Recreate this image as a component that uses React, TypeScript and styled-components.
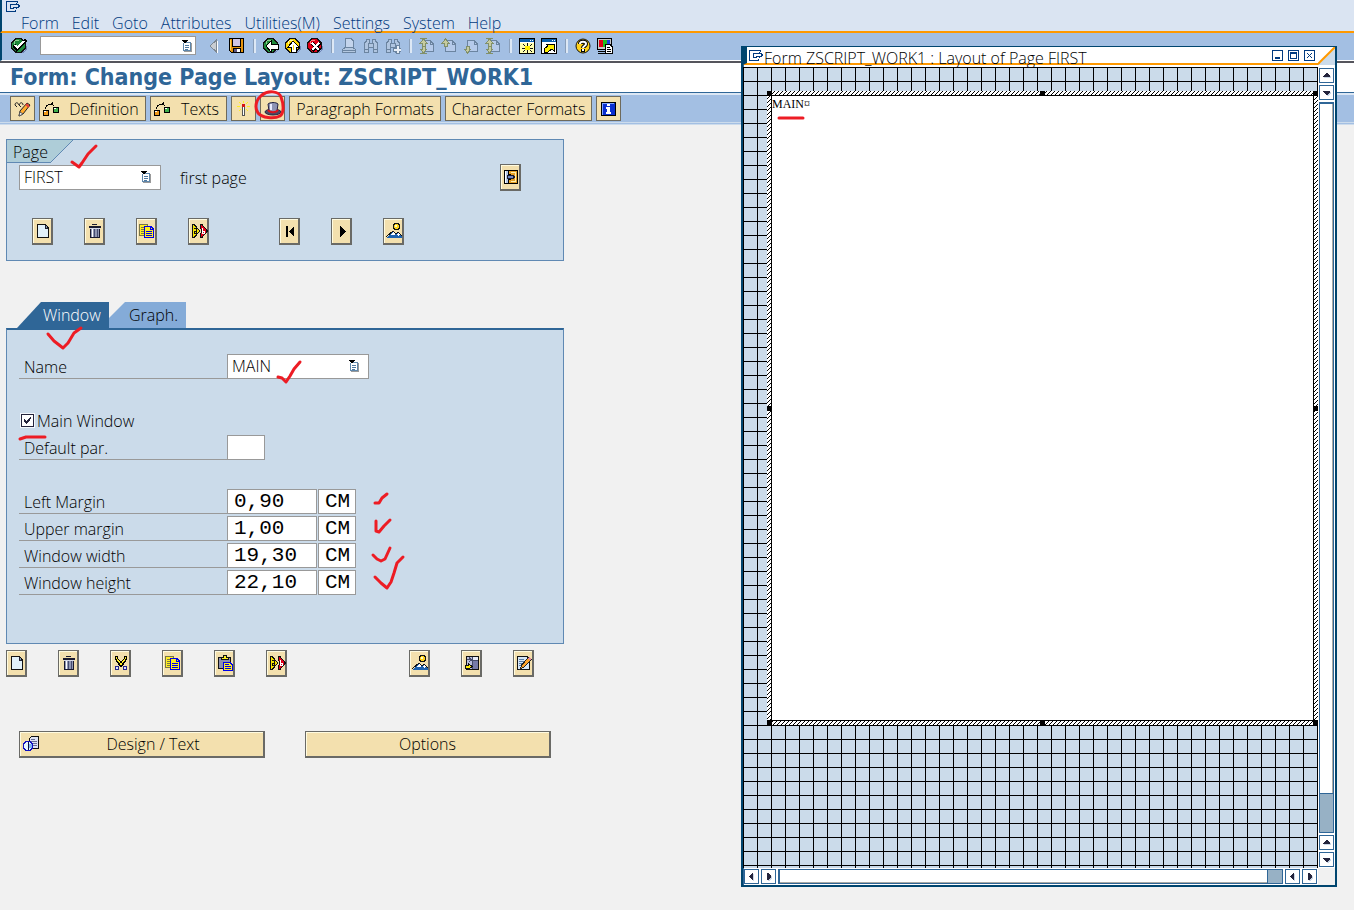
import React from "react";
import styled, { createGlobalStyle } from "styled-components";

const sans = `"Open Sans", "Noto Sans", sans-serif`;
const mono = `"Liberation Mono", monospace`;

const color = {
  frame: "#00456f",
  blue: "#2f6697",
  link: "#003a80",
  sky: "#a3bfe3",
  panel: "#cbdbea",
  sand: "#f3e0ae",
  orange: "#ff9900",
  page: "#f1f1f1",
  grey: "#999999",
};

const Global = createGlobalStyle`
  * { box-sizing: border-box; }
  body { margin: 0; background: ${color.page}; color: #000; font: 300 16px/20px ${sans}; }
  button, input, select { font: inherit; color: inherit; margin: 0; padding: 0; border-radius: 0; }
  svg { display: block; flex: none; }
`;

/* ---------- icons ---------- */

const Glyph = ({ w = 16, h = 16, children }: { w?: number; h?: number; children: React.ReactNode }) => (
  <svg width={w} height={h} viewBox={`0 0 ${w} ${h}`} fill="none" shapeRendering="crispEdges" aria-hidden="true">
    {children}
  </svg>
);

const ExitIcon = () => (
  <Glyph w={15} h={11}>
    <path d="M11 1.500V.5H.5V10.500H9.500V9" stroke="#003a80" />
    <path d="M4.500 7.500V3.500H10V2L14 5L10 8V6.500H7V7.500Z" stroke="#003a80" />
  </Glyph>
);

const ListIcon = () => (
  <Glyph w={10} h={12}>
    <path d="M2 2.500H8.500V10.500H1.500V3" fill="#fff" stroke="#5f87ab" />
    <path d="M9.500 3V11.500H2" stroke="#9a9a9a" />
    <path d="M3 5.500H7M3 7.500H7M3 9.500H6" stroke="#4f79a0" />
    <path d="M0 0H6V1H5V2H4V3H2V2H1V1H0Z" fill="#000" />
  </Glyph>
);

const Disc = ({ fill, hi, children }: { fill: string; hi: string; children: React.ReactNode }) => (
  <Glyph>
    <path d="M6 15H13L16 11V6L14 13Z" fill="#7286b8" />
    <path d="M5 .5H10L14.500 5V10L10 14.500H5L.5 10V5Z" fill={fill} stroke="#111" />
    <path d="M3 6V4L5 2H8" stroke={hi} />
    {children}
  </Glyph>
);

const EnterIcon = () => (
  <Disc fill="#1f8a3b" hi="#8fd08f">
    <path d="M3 7L6 11L15 2" stroke="#000" strokeWidth="4" />
    <path d="M4 7L6.500 10L13 3" stroke="#fff" strokeWidth="2" />
  </Disc>
);
const BackIcon = () => (
  <Disc fill="#1f8a3b" hi="#8fd08f">
    <path d="M3 8L8 3V6H15V11H8V14Z" fill="#fff" stroke="#000" />
  </Disc>
);
const UpIcon = () => (
  <Disc fill="#ffd900" hi="#fff7a0">
    <path d="M8 3L14 9H11V14H6V9H3Z" fill="#fff" stroke="#000" />
    <path d="M8 7H9V12H8Z" fill="#ffd900" />
  </Disc>
);
const CancelIcon = () => (
  <Disc fill="#e00018" hi="#ff8080">
    <path d="M5 5L13 13M13 5L5 13" stroke="#000" strokeWidth="4" />
    <path d="M5 5L12 12M12 5L5 12" stroke="#fff" strokeWidth="2" />
  </Disc>
);
const PrevIcon = () => (
  <Glyph>
    <path d="M9.500 2V14L3 8Z" fill="#c9cdd2" stroke="#7d8791" />
    <path d="M10.500 3V15" stroke="#fff" />
  </Glyph>
);
const SaveIcon = () => (
  <Glyph>
    <path d="M.5 .5H14.500V14.500H2.500L.5 12.500Z" fill="#e8940c" stroke="#000" />
    <path d="M3 0H12V9H3Z" fill="#000" />
    <path d="M4 1H11V8H4Z" fill="#cfc5e4" />
    <path d="M4 10H12V15H4Z" fill="#000" />
    <path d="M5 11H8V14H5Z" fill="#5c5480" />
    <path d="M8 11H11V14H8Z" fill="#fff" />
    <path d="M1.500 2V12" stroke="#ffd45c" />
  </Glyph>
);
const PrintIcon = () => (
  <Glyph>
    <path d="M4.500 9.500V.5H10L12.500 3V9.500" fill="#c3d4ec" stroke="#6b84a0" />
    <path d="M1.500 11.500L4 9.500H12L14.500 11.500V14.500H1.500Z" fill="#b4c8e0" stroke="#6b84a0" />
    <path d="M2 12.500H14" stroke="#6b84a0" />
  </Glyph>
);
const Lens = () => (
  <path
    d="M1.500 14.500V5L3.500 3V1.500H6.500V5H9.500V1.500H12.500V3L14.500 5V14.500H10.500V9.500H5.500V14.500ZM5.500 5V14M10.500 5V14M2 11.500H5M11 11.500H14"
    fill="#b0c5e0"
    stroke="#6b84a0"
  />
);
const FindIcon = () => (
  <Glyph>
    <Lens />
  </Glyph>
);
const FindNextIcon = () => (
  <Glyph>
    <Lens />
    <path d="M8 10H11V7H14V10H16V13H14V15H11V13H8Z" fill="#e8eef6" stroke="#6b84a0" />
  </Glyph>
);
const PageMoveIcon = ({ up, down, edge }: { up?: boolean; down?: boolean; edge?: boolean }) => (
  <Glyph>
    <path d="M4.500 2.500H11L14.500 6V13.500H4.500Z" fill="#b5caea" stroke="#6b84a0" />
    <path d="M11.500 3V6.500H14.500" stroke="#6b84a0" />
    {up && <path d="M4.500 1L8 5H6V8H3V5H1Z" fill="#c6cba0" stroke="#81906a" />}
    {down && <path d="M4.500 15L8 11H6V8H3V11H1Z" fill="#c6cba0" stroke="#81906a" />}
    {edge && <path d="M1 .5H8M1 15.500H8" stroke="#81906a" />}
  </Glyph>
);
const WinFrame = () => (
  <>
    <path d="M.5 .5H15.500V15.500H.5Z" fill="#fff" stroke="#000" />
    <path d="M1 1H15V4H1Z" fill="#0a5fae" />
    <path d="M11 2H12V3H11ZM13 2H14V3H13Z" fill="#fff" />
  </>
);
const SessionIcon = () => (
  <Glyph>
    <WinFrame />
    <path d="M1 5H15V15H1Z" fill="#ffffb0" />
    <path d="M8.500 5V8M8.500 12V15M3 10.500H6M11 10.500H14M4 6L6 8M13 6L11 8M4 14L6 12M13 14L11 12" stroke="#111" />
    <path d="M6 8H11V12H6Z" fill="#ffee00" />
  </Glyph>
);
const ShortcutIcon = () => (
  <Glyph>
    <WinFrame />
    <path d="M3 14V11L7 8L5 6H13V13L11 11L7 14Z" fill="#ffee00" stroke="#000" />
  </Glyph>
);
const HelpIcon = () => (
  <svg width="16" height="16" viewBox="0 0 16 16" fill="none" aria-hidden="true">
    <circle cx="8" cy="8" r="7" fill="#ffd21a" stroke="#111" strokeWidth="1" />
    <path d="M5 6C5 3 11 3 11 6C11 8 8 8 8 10" stroke="#000" strokeWidth="4" />
    <path d="M8 11V14" stroke="#000" strokeWidth="4" />
    <path d="M5 6C5 3 11 3 11 6C11 8 8 8 8 10" stroke="#fff" strokeWidth="2" />
    <path d="M8 11V13" stroke="#fff" strokeWidth="2" />
  </svg>
);
const LayoutIcon = () => (
  <Glyph>
    <path d="M.5 .5H14.500V11.500H.5Z" fill="#c8c8c8" stroke="#000" />
    <path d="M2 2H6V9H2Z" fill="#e00018" />
    <path d="M6 2H10V9H6Z" fill="#1ec01e" />
    <path d="M10 2H13V9H10Z" fill="#1a3de0" />
    <path d="M1 13.500H8M1 15.500H8" stroke="#000" />
    <path d="M8.500 6.500H13L15.500 9V15.500H8.500Z" fill="#fff" stroke="#000" />
    <path d="M10 9.500H13M10 11.500H14M10 13.500H14" stroke="#000" />
  </Glyph>
);

const DisplayChangeIcon = () => (
  <svg width="17" height="16" viewBox="0 0 17 16" fill="none" aria-hidden="true">
    <path d="M1 4C1 1 4 1 5 4M5 4C6 1 9 1 9 4M1 4L3 6M5 4L7 6" stroke="#222" />
    <path d="M13 2L16 4L9 13L5 15L6 10Z" fill="#ffab2e" stroke="#222" />
    <path d="M12 3L15 6" stroke="#e23a3a" strokeWidth="2" />
    <path d="M6 11L9 13L5 15Z" fill="#fff" stroke="#555" />
  </svg>
);
const TreeIcon = () => (
  <Glyph>
    <path d="M2.500 8V6M3.500 6V4M4 4.500H5M5 3.500H8M8 2.500L11 5M9.500 4V1" stroke="#000" />
    <path d="M.5 9.500H5.500V14.500H.5Z" fill="#f09a1a" stroke="#000" />
    <path d="M10.500 6.500H15.500V11.500H10.500Z" fill="#3fae4c" stroke="#000" />
    <path d="M1 10.500H3M11 7.500H13" stroke="#fff" />
  </Glyph>
);
const WandIcon = () => (
  <Glyph>
    <path d="M4 1L6 3M13 1L11 3M2 5.500H5M12 5.500H15M4 10L6 8M13 10L11 8M8.500 0V2" stroke="#ffee22" />
    <path d="M7 3H10V6H7Z" fill="#d81414" />
    <path d="M7.500 6V14.500H9.500V6" fill="#fff" stroke="#555" />
  </Glyph>
);
const HatIcon = () => (
  <svg width="18" height="16" viewBox="0 0 18 16" fill="none" aria-hidden="true">
    <ellipse cx="9" cy="11" rx="8" ry="3" fill="#4b4b66" stroke="#222240" />
    <path d="M4 3C6 1 12 1 14 3L13 10C11 12 7 12 5 10Z" fill="#8e93b5" stroke="#222240" />
    <path d="M7 3V9" stroke="#e8eaff" strokeWidth="2" />
    <path d="M4 9C6 12 12 12 14 9" stroke="#d81420" strokeWidth="2" />
  </svg>
);
const InfoIcon = () => (
  <Glyph>
    <path d="M1.500 1.500H15.500V14.500H1.500Z" fill="#0b2fd0" stroke="#000" />
    <path d="M2.500 14V2.500H14" stroke="#7ea2ff" />
    <path d="M7 3H10V5H7ZM6 6H10V11H11V13H6V11H7V8H6Z" fill="#fff" />
  </Glyph>
);

const NewIcon = () => (
  <Glyph>
    <path d="M2.500 1.500H10L13.500 5V14.500H2.500Z" fill="#e2f1fa" stroke="#111" />
    <path d="M10.500 2V5.500H13" fill="#7c92ad" stroke="#223" />
  </Glyph>
);
const TrashIcon = () => (
  <Glyph>
    <path d="M5 1.500H10M2.500 3.500H13.500V4.500H2.500Z" stroke="#1a1a2e" />
    <path d="M3.500 6V14.500H12.500V6" fill="#9197b3" stroke="#1a1a2e" />
    <path d="M5.500 6V14" stroke="#fff" />
    <path d="M7.500 6V14M10.500 6V14" stroke="#464c70" />
    <path d="M3 5H13V6H3Z" fill="#d6d9e8" />
  </Glyph>
);
const CopyIcon = () => (
  <Glyph>
    <path d="M.5 1.500H8.500V12.500H.5Z" fill="#ffee22" stroke="#77754a" />
    <path d="M2 4.500H5M2 6.500H5M2 8.500H5M2 10.500H5" stroke="#77754a" />
    <path d="M5.500 3.500H12L14.500 6V14.500H5.500Z" fill="#ffee22" stroke="#0000e8" />
    <path d="M11.500 4V6.500H14M7 8.500H13M7 10.500H13M7 12.500H13" stroke="#0000e8" />
  </Glyph>
);
const RenameIcon = () => (
  <Glyph w={17}>
    <path d="M1.500 1.500H3L9 8L3 14.500H1.500Z" fill="#f5e500" stroke="#111" />
    <path d="M3 5.500H5.500V11M3.500 8.500H5M3.500 8V10.500H5" stroke="#111" />
    <path d="M9.500 1.500H11L16.500 8L11 14.500H9.500V11L11 8L9.500 5Z" fill="#e00018" stroke="#111" />
    <path d="M11.500 5V10.500H13.500V8.500H12" stroke="#fff" />
  </Glyph>
);
const FirstIcon = () => (
  <Glyph>
    <path d="M4 3H6V14H4ZM12 3V14L7 9V8Z" fill="#000" />
  </Glyph>
);
const PlayIcon = () => (
  <Glyph>
    <path d="M6 3L12 8V9L6 14Z" fill="#000" />
  </Glyph>
);
const PictureIcon = () => (
  <Glyph>
    <path d="M9 .5H12L13.500 2V5L12 6.500H9L7.500 5V2Z" fill="#ffd21a" stroke="#111" />
    <path d="M9 2H11V4H9Z" fill="#fffcc0" />
    <path d="M0 15L7 8L10 11L12 9L16 14V15Z" fill="#1d62b0" />
    <path d="M5 11L7 9L9 11L8 13L7 11L6 13ZM11 11L12 10L14 12L12 13Z" fill="#fff" />
    <path d="M0 14L7 8L10 11L12 9L16 13" stroke="#111" />
  </Glyph>
);
const NavigateIcon = () => (
  <Glyph>
    <path d="M1.500 1.500H14.500V14.500H1.500Z" fill="#b7c9e8" stroke="#000" />
    <path d="M6 2H14V14H6Z" fill="#e5a025" />
    <path d="M5.500 2V5.500H8M5.500 14V10.500H8" stroke="#000" />
    <path d="M4 6.500H10L11.500 8L10 9.500H4Z" fill="#6f88c4" stroke="#1a1a2e" />
    <path d="M8 3.500H12.500V12.500H8" stroke="#fff0b0" />
    <path d="M2.500 2V14" stroke="#fff" />
  </Glyph>
);
const CutIcon = () => (
  <Glyph>
    <path d="M3 1L4 5L10 11M13 1L12 5L6 11" stroke="#000" strokeWidth="3" />
    <path d="M3 2L4.500 5L9 10M13 2L11.500 5L7 10" stroke="#ffee22" />
    <path d="M2.500 11.500H5.500V14.500H2.500ZM10.500 11.500H13.500V14.500H10.500Z" fill="#dce2ff" stroke="#26268c" />
  </Glyph>
);
const PasteIcon = () => (
  <Glyph>
    <path d="M1.500 2.500H13.500V13.500H1.500Z" fill="#8d8fae" stroke="#111" />
    <path d="M6 .5H9V2.500H11V4.500H4V2.500H6Z" fill="#ffee22" stroke="#111" />
    <path d="M6.500 7.500H13L15.500 10V15.500H6.500Z" fill="#ffee22" stroke="#0000e8" />
    <path d="M8 9.500H12M8 11.500H14M8 13.500H14" stroke="#0000e8" />
  </Glyph>
);
const InsertIcon = () => (
  <Glyph>
    <path d="M2.500 1.500H14.500V14.500H2.500Z" fill="#b9bddb" stroke="#111" />
    <path d="M9 6H14V14H9Z" fill="#777ba8" />
    <path d="M3 4.500H7M5 2.500L7.500 5L5 7M8.500 2V14M9 5.500H14" stroke="#444a6a" />
    <path d="M9 2H14V5H9Z" fill="#e7e9f6" />
    <path d="M1 10.500H4V8L8 11.500L4 15V13H1Z" fill="#ffee00" stroke="#111" />
  </Glyph>
);
const EditIcon = () => (
  <Glyph>
    <path d="M1.500 1.500H11L13.500 4V14.500H1.500Z" fill="#d6e6f6" stroke="#111" />
    <path d="M3 4.500H8M3 6.500H9M3 8.500H7M3 10.500H6" stroke="#5b7ea8" />
    <path d="M13 2L15.500 4.500L8 12L4 14L6 9.500Z" fill="#ffa32b" stroke="#222" />
    <path d="M13 3L15 5" stroke="#e58a9a" strokeWidth="2" />
  </Glyph>
);
const DesignIcon = () => (
  <Glyph>
    <path d="M6.500 2.500L8.500 .5H15.500V12.500H6.500Z" fill="#dfe3f5" stroke="#111" />
    <path d="M8 3.500H12M8 5.500H14M8 7.500H14M10 9.500H14" stroke="#666c94" />
    <path d="M3 5.500H7L9.500 8V12L7 14.500H3L.5 12V8Z" fill="#e6f6ff" stroke="#1010c0" />
    <path d="M5.500 6V14" stroke="#101040" />
    <path d="M6 8H9V12H6Z" fill="#7fb5ee" />
  </Glyph>
);

const ArrowIcon = ({ dir }: { dir: "up" | "down" | "left" | "right" }) => {
  const shape = { up: "M3 8V7L6 4H7L10 7V8Z", down: "M3 5V6L6 9H7L10 6V5Z", left: "M8 3H7L4 6V7L7 10H8Z", right: "M5 3H6L9 6V7L6 10H5Z" }[dir];
  return (
    <Glyph w={13} h={13}>
      <path d={shape} fill="#c9d6e6" transform="translate(1 1)" />
      <path d={shape} fill="#24243c" />
    </Glyph>
  );
};

/* ---------- application header ---------- */

const Screen = styled.div`
  position: relative;
  min-height: 100vh;
`;

const MenuArea = styled.header`
  border-left: 2px solid ${color.frame};
  border-bottom: 2px solid ${color.orange};
  background: #dae4f2;
  height: 33px;
  padding: 1px 0 0 4px;
`;

const Menu = styled.nav`
  display: flex;
  gap: 13px;
  padding-left: 15px;
`;

const MenuItem = styled.button`
  border: 0;
  background: none;
  color: ${color.link};
  line-height: 22px;
`;

const Toolbar = styled.div`
  display: flex;
  align-items: center;
  gap: 6px;
  height: 28px;
  padding: 0 0 2px 9px;
  border-left: 2px solid ${color.frame};
  border-bottom: 1px solid #fff;
  background: ${color.sky};
`;

const ToolButton = styled.button`
  width: 16px;
  height: 16px;
  border: 0;
  background: none;
`;

const Divider = styled.span`
  width: 6px;
  height: 14px;
  display: flex;
  justify-content: center;
  &::before {
    content: "";
    width: 2px;
    background: #dde8f5;
    border-left: 1px solid #8a9fba;
  }
`;

const CommandBox = styled.div`
  display: flex;
  align-items: center;
  width: 156px;
  height: 19px;
  margin: 0 5px 0 7px;
  padding-right: 3px;
  border: 1px solid ${color.grey};
  background: #fff;
`;

const CommandInput = styled.input`
  flex: 1;
  min-width: 0;
  height: 17px;
  border: 0;
  background: none;
  outline: 0;
`;

const ListButton = styled.button`
  border: 0;
  background: none;
`;

const TitleBar = styled.div`
  height: 32px;
  padding-left: 10px;
  border-top: 2px solid #55555c;
  border-bottom: 1px solid ${color.blue};
  background: #fff;
`;

const Title = styled.h1`
  margin: 0;
  color: ${color.blue};
  font: bold 23px/29px "DejaVu Sans Condensed", "DejaVu Sans", sans-serif;
`;

const ActionBar = styled.div`
  display: flex;
  align-items: center;
  gap: 4px;
  height: 32px;
  padding-left: 10px;
  border-top: 2px solid #dce7f4;
  border-bottom: 3px double #cddcec;
  background: ${color.sky};
`;

const ActionButton = styled.button<{ $width?: number }>`
  display: flex;
  align-items: center;
  gap: 7px;
  width: ${(p) => p.$width ?? 25}px;
  height: 25px;
  padding: 0 3px;
  border: 1px solid #6e6a5c;
  background: ${color.sand};
  white-space: nowrap;
`;

const ActionText = styled.span`
  flex: 1;
  text-align: center;
`;

/* ---------- form ---------- */

const Form = styled.main`
  width: 100%;
  max-width: 564px;
  padding: 14px 0 0 6px;
`;

const Group = styled.section`
  height: 122px;
  border: 1px solid #6089b3;
  background: ${color.panel};
`;

const Legend = styled.h2`
  width: 67px;
  height: 23px;
  margin: 0;
  padding-left: 6px;
  background:
    linear-gradient(#6089b3, #6089b3) 0 100% / 44px 1px no-repeat,
    linear-gradient(135deg, #aecdd8 0 46px, #6089b3 46px 47px, transparent 47px);
  font: inherit;
  line-height: 24px;
`;

const FieldLine = styled.div`
  display: flex;
  align-items: center;
  gap: 19px;
  padding: 1px 42px 0 12px;
`;

const Combo = styled.span`
  position: relative;
  width: 142px;
  height: 25px;
  svg {
    position: absolute;
    right: 10px;
    top: 6px;
    pointer-events: none;
  }
`;

const ComboSelect = styled.select`
  appearance: none;
  width: 100%;
  height: 25px;
  padding: 0 24px 2px 4px;
  border: 1px solid ${color.grey};
  background: #fff;
`;

const Push = styled.span`
  flex: 1;
`;

const IconRow = styled.div<{ $inset?: boolean }>`
  display: flex;
  gap: 31px;
  padding: ${(p) => (p.$inset ? "27px 0 0 25px" : "6px 0 0")};
`;

const Spacer = styled.span<{ $width: number }>`
  width: ${(p) => p.$width}px;
`;

const KeyButton = styled.button`
  display: flex;
  align-items: center;
  justify-content: center;
  width: 21px;
  height: 27px;
  padding-left: 2px;
  border: solid #6a6a66;
  border-width: 1px 2px 2px 1px;
  background: ${color.sand};
  box-shadow: inset 1px 1px #fffbe0;
`;

const Tabs = styled.div`
  display: flex;
  height: 26px;
  margin-top: 41px;
  padding-left: 11px;
`;

const Tab = styled.button<{ $active?: boolean }>`
  width: ${(p) => (p.$active ? 92 : 77)}px;
  padding-left: ${(p) => (p.$active ? 26 : 20)}px;
  border: 0;
  background: ${(p) => (p.$active ? color.blue : "#84abd8")};
  color: ${(p) => (p.$active ? "#fff" : "#000")};
  clip-path: ${(p) =>
    p.$active ? "polygon(24px 0, 100% 0, 100% 100%, 0 100%)" : "polygon(16px 0, 100% 0, 100% 100%, 0 100%, 0 16px)"};
  text-align: left;
  line-height: 26px;
`;

const TabPanel = styled.section`
  display: flex;
  flex-direction: column;
  gap: 2px;
  height: 316px;
  padding: 24px 12px 0;
  border: 1px solid #6089b3;
  border-top: 2px solid ${color.blue};
  background: ${color.panel};
`;

const Row = styled.div`
  display: flex;
  height: 25px;
`;

const RowLabel = styled.label`
  width: 208px;
  padding-left: 5px;
  border-bottom: 1px solid ${color.grey};
  line-height: 27px;
`;

const CheckLabel = styled.label`
  padding-left: 3px;
  line-height: 27px;
`;

const Check = styled.input`
  appearance: none;
  width: 13px;
  height: 13px;
  margin: 6px 0 0 2px;
  border: 1px solid #24243c;
  outline: 1px solid #f4f8fc;
  background: #fff;
  & + svg {
    visibility: hidden;
  }
  &:checked + svg {
    visibility: visible;
  }
`;

const CheckBox = styled.span`
  position: relative;
  display: flex;
  svg {
    position: absolute;
    left: 5px;
    top: 9px;
    pointer-events: none;
  }
`;

const Value = styled.input<{ $width: number }>`
  width: ${(p) => p.$width}px;
  height: 25px;
  margin-right: 1px;
  padding-left: 6px;
  border: 1px solid ${color.grey};
  background: #fff;
  font: 400 21px/23px ${mono};
`;

const WideRow = styled.div`
  display: flex;
  gap: 40px;
  padding: 54px 13px 0;
`;

const WideButton = styled(KeyButton)`
  flex: 1;
  justify-content: flex-start;
  gap: 7px;
  padding: 0 3px;
`;

/* ---------- floating layout window ---------- */

const FloatWindow = styled.aside`
  position: absolute;
  left: 741px;
  right: 17px;
  top: 46px;
  border: 2px solid ${color.frame};
  border-top-width: 1px;
  box-shadow: inset 1px 0 ${color.blue};
  background: #fff;
`;

const WindowTitle = styled.div`
  display: flex;
  align-items: center;
  height: 18px;
  padding-left: 2px;
  border-left: 4px solid ${color.frame};
  border-bottom: 2px solid ${color.orange};
`;

const WindowName = styled.h2`
  flex: 1;
  margin: 0;
  padding-top: 6px;
  font: inherit;
  line-height: 18px;
  white-space: nowrap;
`;

const WindowKeys = styled.div`
  display: flex;
  gap: 5px;
  padding-right: 3px;
`;

const WindowKey = styled.button`
  width: 11px;
  height: 11px;
  border: 0;
  background: none;
`;

const Corner = styled.span`
  align-self: flex-start;
  height: 18px;
`;

const WindowBody = styled.div`
  display: grid;
  grid-template-columns: minmax(0, 1fr) 17px;
  grid-template-rows: 801px 17px;
  padding-top: 2px;
`;

const Canvas = styled.div`
  padding: 24px 0 0 24px;
  border-right: 1px solid #000;
  background:
    linear-gradient(#000 0 1px, transparent 1px) 0 0 / 14px 14px,
    linear-gradient(90deg, #000 0 1px, transparent 1px) 0 0 / 14px 14px,
    ${color.panel};
`;

const hatchDot = "conic-gradient(at 1px 1px, transparent 270deg, #000 0)";

const Frame = styled.div`
  position: relative;
  height: 634px;
  padding: 4px;
  margin-right: -1px;
  background:
    ${hatchDot} 3px 0 / 4px 4px,
    ${hatchDot} 2px 1px / 4px 4px,
    ${hatchDot} 1px 2px / 4px 4px,
    ${hatchDot} 0 3px / 4px 4px,
    #fff;
`;

const Sheet = styled.div`
  height: 626px;
  border: 1px solid #000;
  background: #fff;
  font: 12px/14px "Liberation Serif", serif;
  padding-top: 1px;
`;

const Handle = styled.i<{ $x: number; $y: number }>`
  position: absolute;
  left: calc((100% - 5px) * ${(p) => p.$x});
  top: calc((100% - 5px) * ${(p) => p.$y});
  width: 5px;
  height: 5px;
  background: #000;
`;

const Scroll = styled.div<{ $vertical?: boolean }>`
  display: flex;
  flex-direction: ${(p) => (p.$vertical ? "column" : "row")};
  gap: 2px;
  padding: 1px;
`;

const ScrollKey = styled.button`
  flex: none;
  width: 15px;
  height: 15px;
  border: 1px solid ${color.blue};
  background: #fff;
`;

const Track = styled.div<{ $vertical?: boolean }>`
  display: flex;
  flex-direction: ${(p) => (p.$vertical ? "column" : "row")};
  justify-content: flex-end;
  flex: 1;
  border: 1px solid ${color.blue};
  border-width: ${(p) => (p.$vertical ? "2px 1px 1px" : "1px 1px 1px 2px")};
  background: #fff;
  box-shadow: inset -1px -1px #a9a9a4;
`;

const Thumb = styled.span<{ $length: number; $vertical?: boolean }>`
  ${(p) => (p.$vertical ? "height" : "width")}: ${(p) => p.$length}px;
  background: #97b1c5;
  border: 0 solid ${color.blue};
  border-width: ${(p) => (p.$vertical ? "1px 0 0" : "0 0 0 1px")};
`;

const CornerBox = styled.span`
  background: ${color.page};
`;

const Marks = styled.svg`
  position: absolute;
  left: 0;
  top: 0;
  pointer-events: none;
`;

const tools: ([string, React.ReactNode] | null)[] = [
  ["Previous", <PrevIcon />],
  ["Save", <SaveIcon />],
  null,
  ["Back", <BackIcon />],
  ["Exit", <UpIcon />],
  ["Cancel", <CancelIcon />],
  null,
  ["Print", <PrintIcon />],
  ["Find", <FindIcon />],
  ["Find next", <FindNextIcon />],
  null,
  ["First page", <PageMoveIcon up down edge />],
  ["Page up", <PageMoveIcon up />],
  ["Page down", <PageMoveIcon down />],
  ["Last page", <PageMoveIcon up down edge />],
  null,
  ["New session", <SessionIcon />],
  ["Create shortcut", <ShortcutIcon />],
  null,
  ["Help", <HelpIcon />],
  ["Customize layout", <LayoutIcon />],
];

const menus = ["Form", "Edit", "Goto", "Attributes", "Utilities(M)", "Settings", "System", "Help"];

const sizes = [
  ["Left Margin", "0,90"],
  ["Upper margin", "1,00"],
  ["Window width", "19,30"],
  ["Window height", "22,10"],
];

const Key = ({ label, children }: { label: string; children: React.ReactNode }) => (
  <KeyButton aria-label={label}>{children}</KeyButton>
);

const ComboField = ({ id, label, value }: { id: string; label?: string; value: string }) => (
  <Combo>
    <ComboSelect id={id} aria-label={label} defaultValue={value}>
      <option>{value}</option>
    </ComboSelect>
    <ListIcon />
  </Combo>
);

const LayoutWindow = () => (
  <FloatWindow>
    <WindowTitle>
      <ExitIcon />
      <WindowName>Form ZSCRIPT_WORK1 : Layout of Page FIRST</WindowName>
      <WindowKeys>
        <WindowKey aria-label="Minimize">
          <Glyph w={11} h={11}>
            <path d="M.5 .5H10.500V10.500H.5Z" stroke="#003a80" />
            <path d="M3 7H8V9H3Z" fill="#003a80" />
          </Glyph>
        </WindowKey>
        <WindowKey aria-label="Maximize">
          <Glyph w={11} h={11}>
            <path d="M.5 .5H10.500V10.500H.5ZM2.500 3.500H8.500V8.500H2.500Z" stroke="#003a80" />
            <path d="M2 2H9V4H2Z" fill="#003a80" />
          </Glyph>
        </WindowKey>
        <WindowKey aria-label="Close">
          <Glyph w={11} h={11}>
            <path d="M.5 .5H10.500V10.500H.5Z" stroke="#003a80" />
            <path d="M3 3H4V4H5V5H6V4H7V3H8V4H7V5H6V6H7V7H8V8H7V7H6V6H5V7H4V8H3V7H4V6H5V5H4V4H3Z" fill="#003a80" />
          </Glyph>
        </WindowKey>
      </WindowKeys>
      <Corner>
        <svg width="17" height="18" viewBox="0 0 17 18" aria-hidden="true">
          <path d="M0 18L17 1V18Z" fill={color.panel} />
          <path d="M0 17L17 0" stroke={color.orange} strokeWidth="2" />
        </svg>
      </Corner>
    </WindowTitle>
    <WindowBody>
      <Canvas>
        <Frame>
          <Sheet>MAIN¤</Sheet>
          {[0, 0.5, 1].map((x) =>
            [0, 0.5, 1].map((y) => (x === 0.5 && y === 0.5 ? null : <Handle key={`${x}-${y}`} $x={x} $y={y} />))
          )}
        </Frame>
      </Canvas>
      <Scroll $vertical>
        <ScrollKey aria-label="Scroll up"><ArrowIcon dir="up" /></ScrollKey>
        <ScrollKey aria-label="Scroll down"><ArrowIcon dir="down" /></ScrollKey>
        <Track $vertical><Thumb $vertical $length={39} /></Track>
        <ScrollKey aria-label="Page up"><ArrowIcon dir="up" /></ScrollKey>
        <ScrollKey aria-label="Page down"><ArrowIcon dir="down" /></ScrollKey>
      </Scroll>
      <Scroll>
        <ScrollKey aria-label="Scroll left"><ArrowIcon dir="left" /></ScrollKey>
        <ScrollKey aria-label="Scroll right"><ArrowIcon dir="right" /></ScrollKey>
        <Track><Thumb $length={15} /></Track>
        <ScrollKey aria-label="Page left"><ArrowIcon dir="left" /></ScrollKey>
        <ScrollKey aria-label="Page right"><ArrowIcon dir="right" /></ScrollKey>
      </Scroll>
      <CornerBox />
    </WindowBody>
  </FloatWindow>
);

export default function App() {
  return (
    <Screen>
      <Global />
      <MenuArea>
        <ExitIcon />
        <Menu>
          {menus.map((m) => (
            <MenuItem key={m}>{m}</MenuItem>
          ))}
        </Menu>
      </MenuArea>
      <Toolbar>
        <ToolButton aria-label="Enter"><EnterIcon /></ToolButton>
        <CommandBox>
          <CommandInput aria-label="Command" />
          <ListButton aria-label="Command history"><ListIcon /></ListButton>
        </CommandBox>
        {tools.map((t, i) =>
          t ? <ToolButton key={i} aria-label={t[0]}>{t[1]}</ToolButton> : <Divider key={i} />
        )}
      </Toolbar>
      <TitleBar>
        <Title>Form: Change Page Layout: ZSCRIPT_WORK1</Title>
      </TitleBar>
      <ActionBar>
        <ActionButton aria-label="Display or change"><DisplayChangeIcon /></ActionButton>
        <ActionButton $width={107}><TreeIcon /><ActionText>Definition</ActionText></ActionButton>
        <ActionButton $width={77}><TreeIcon /><ActionText>Texts</ActionText></ActionButton>
        <ActionButton aria-label="Check"><WandIcon /></ActionButton>
        <ActionButton aria-label="Header"><HatIcon /></ActionButton>
        <ActionButton $width={152}><ActionText>Paragraph Formats</ActionText></ActionButton>
        <ActionButton $width={147}><ActionText>Character Formats</ActionText></ActionButton>
        <ActionButton aria-label="Information"><InfoIcon /></ActionButton>
      </ActionBar>

      <Form>
        <Group>
          <Legend>Page</Legend>
          <FieldLine>
            <ComboField id="page" label="Page" value="FIRST" />
            <span>first page</span>
            <Push />
            <Key label="Page attributes"><NavigateIcon /></Key>
          </FieldLine>
          <IconRow $inset>
            <Key label="Create page"><NewIcon /></Key>
            <Key label="Delete page"><TrashIcon /></Key>
            <Key label="Copy page"><CopyIcon /></Key>
            <Key label="Rename page"><RenameIcon /></Key>
            <Spacer $width={8} />
            <Key label="First page"><FirstIcon /></Key>
            <Key label="Next page"><PlayIcon /></Key>
            <Key label="Page graphic"><PictureIcon /></Key>
          </IconRow>
        </Group>

        <Tabs role="tablist">
          <Tab role="tab" aria-selected $active>Window</Tab>
          <Tab role="tab" aria-selected={false}>Graph.</Tab>
        </Tabs>
        <TabPanel>
          <Row>
            <RowLabel htmlFor="name">Name</RowLabel>
            <ComboField id="name" value="MAIN" />
          </Row>
          <Row />
          <Row>
            <CheckBox>
              <Check id="main" type="checkbox" defaultChecked />
              <Glyph w={8} h={7}>
                <path d="M0 2H1V3H2V4H3V3H4V2H5V1H6V0H7V2H6V4H5V5H4V6H3V7H2V6H1V5H0Z" fill="#24243c" />
              </Glyph>
            </CheckBox>
            <CheckLabel htmlFor="main">Main Window</CheckLabel>
          </Row>
          <Row>
            <RowLabel htmlFor="par">Default par.</RowLabel>
            <Value id="par" $width={38} />
          </Row>
          <Row />
          {sizes.map(([label, value]) => (
            <Row key={label}>
              <RowLabel htmlFor={label}>{label}</RowLabel>
              <Value id={label} $width={90} defaultValue={value} />
              <Value aria-label={`${label} unit`} $width={38} defaultValue="CM" />
            </Row>
          ))}
        </TabPanel>

        <IconRow>
          <Key label="Create window"><NewIcon /></Key>
          <Key label="Delete window"><TrashIcon /></Key>
          <Key label="Cut"><CutIcon /></Key>
          <Key label="Copy"><CopyIcon /></Key>
          <Key label="Paste"><PasteIcon /></Key>
          <Key label="Rename window"><RenameIcon /></Key>
          <Spacer $width={60} />
          <Key label="Window graphic"><PictureIcon /></Key>
          <Key label="Insert"><InsertIcon /></Key>
          <Key label="Edit text"><EditIcon /></Key>
        </IconRow>
        <WideRow>
          <WideButton><DesignIcon /><ActionText>Design / Text</ActionText></WideButton>
          <WideButton><ActionText>Options</ActionText></WideButton>
        </WideRow>
      </Form>

      <LayoutWindow />

      <Marks width="820" height="620" viewBox="0 0 820 620" fill="none" stroke="#ed1c24" strokeWidth="3" strokeLinecap="round" strokeLinejoin="round" aria-hidden="true">
        <path d="M262 95C268 90 279 91 281 97C284 105 284 113 280 116C274 119 262 118 258 113C254 107 256 98 264 94" />
        <path d="M72 162L79 167L82 163L88 154L96 146" />
        <path d="M48 334L54 341L63 348L68 343L74 333L81 328" />
        <path d="M278 377L282 378L286 382L290 376L294 369L300 362" />
        <path d="M20 439L26 437H45" />
        <path d="M375 503H379L382 498L387 494" />
        <path d="M376 521L376 531L379 532L384 526L390 520" />
        <path d="M373 555L377 559L381 561L385 559L390 548" />
        <path d="M375 577L381 583L387 588L391 582L394 573L397 563L403 557" />
        <path d="M779 118H803" />
      </Marks>
    </Screen>
  );
}
